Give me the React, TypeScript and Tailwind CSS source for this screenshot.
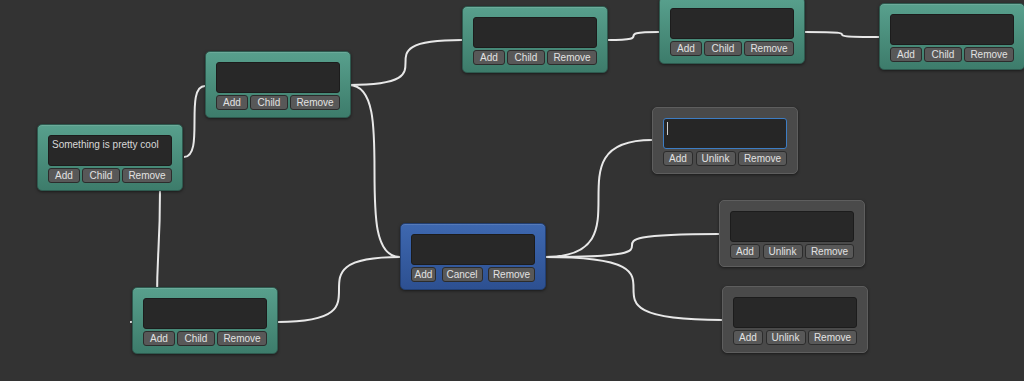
import React from "react";

type Variant = "green" | "blue" | "gray";

const variantClass: Record<Variant, string> = {
  green:
    "bg-gradient-to-b from-[#58a08d] to-[#3d7c6b] border-[#2e5a4f] shadow-[0_1px_3px_rgba(0,0,0,0.5),inset_0_1px_0_rgba(255,255,255,0.12)]",
  blue:
    "bg-gradient-to-b from-[#3e68b0] to-[#2d5091] border-[#223f73] shadow-[0_1px_3px_rgba(0,0,0,0.5),inset_0_1px_0_rgba(255,255,255,0.12)]",
  gray:
    "bg-[#4a4a4a] border-[#5e5e5e] shadow-[0_1px_3px_rgba(0,0,0,0.5)]",
};

type Btn = { label: string; w: string };

const greenBtns: Btn[] = [
  { label: "Add", w: "w-[32px]" },
  { label: "Child", w: "w-[38px]" },
  { label: "Remove", w: "w-[50px]" },
];
const grayBtns: Btn[] = [
  { label: "Add", w: "w-[30px]" },
  { label: "Unlink", w: "w-[40px]" },
  { label: "Remove", w: "w-[49px]" },
];
const blueBtns: Btn[] = [
  { label: "Add", w: "w-[25px]" },
  { label: "Cancel", w: "w-[41px]" },
  { label: "Remove", w: "w-[47px]" },
];

function Node({
  pos,
  variant,
  buttons,
  text,
  focused,
}: {
  pos: string;
  variant: Variant;
  buttons: Btn[];
  text?: string;
  focused?: boolean;
}) {
  return (
    <div
      className={`absolute ${pos} w-[146px] h-[67px] rounded-[5px] border px-[10px] pt-[10px] flex flex-col gap-[2px] ${variantClass[variant]}`}
    >
      <div
        className={
          focused
            ? "relative h-[31px] w-full rounded-[3px] bg-[#262626] border border-[#3d7dc4]"
            : "relative h-[31px] w-full rounded-[3px] bg-[#282828] border border-[#1c1c1c]"
        }
      >
        {text ? (
          <span className="absolute left-[3px] top-[2px] whitespace-nowrap text-[10px] leading-[13px] text-[#d8d8d8]">
            {text}
          </span>
        ) : null}
        {focused ? (
          <span className="absolute left-[3px] top-[3px] w-[1px] h-[13px] bg-[#d0d0d0]" />
        ) : null}
      </div>
      <div className="flex justify-between">
        {buttons.map((b) => (
          <div
            key={b.label}
            className={`${b.w} h-[15px] rounded-[3px] bg-[#585858] border border-[#2c2c2c] flex items-center justify-center text-[10px] leading-none text-[#e2e2e2]`}
          >
            {b.label}
          </div>
        ))}
      </div>
    </div>
  );
}

function edge(x1: number, y1: number, x2: number, y2: number) {
  const d = Math.max(Math.abs(x2 - x1), 20);
  return `M${x1} ${y1} C${x1 + d} ${y1} ${x2 - d} ${y2} ${x2} ${y2}`;
}

export default function App() {
  const edges = [
    edge(184, 157, 205, 86),
    edge(349, 85, 462, 40),
    edge(608, 40, 659, 32),
    edge(805, 32, 879, 37),
    edge(349, 85, 400, 257),
    edge(278, 322, 400, 257),
    edge(545, 257, 652, 140),
    edge(545, 257, 719, 234),
    edge(545, 257, 722, 320),
    "M160 190 C160 250 157 250 157 300 Q157 322 130 322",
  ];
  return (
    <div
      className="relative w-[1024px] h-[381px] overflow-hidden bg-[#333333]"
      style={{ fontFamily: "'Liberation Sans', Arial, sans-serif" }}
    >
      <svg className="absolute inset-0" width={1024} height={381}>
        {edges.map((d, i) => (
          <path key={i} d={d} fill="none" stroke="#e8e8e8" strokeWidth={2} />
        ))}
      </svg>
      <Node pos="left-[37px] top-[124px]" variant="green" buttons={greenBtns} text="Something is pretty cool" />
      <Node pos="left-[205px] top-[51px]" variant="green" buttons={greenBtns} />
      <Node pos="left-[462px] top-[6px]" variant="green" buttons={greenBtns} />
      <Node pos="left-[659px] top-[-3px]" variant="green" buttons={greenBtns} />
      <Node pos="left-[879px] top-[3px]" variant="green" buttons={greenBtns} />
      <Node pos="left-[132px] top-[287px]" variant="green" buttons={greenBtns} />
      <Node pos="left-[400px] top-[223px]" variant="blue" buttons={blueBtns} />
      <Node pos="left-[652px] top-[107px]" variant="gray" buttons={grayBtns} focused />
      <Node pos="left-[719px] top-[200px]" variant="gray" buttons={grayBtns} />
      <Node pos="left-[722px] top-[286px]" variant="gray" buttons={grayBtns} />
    </div>
  );
}
